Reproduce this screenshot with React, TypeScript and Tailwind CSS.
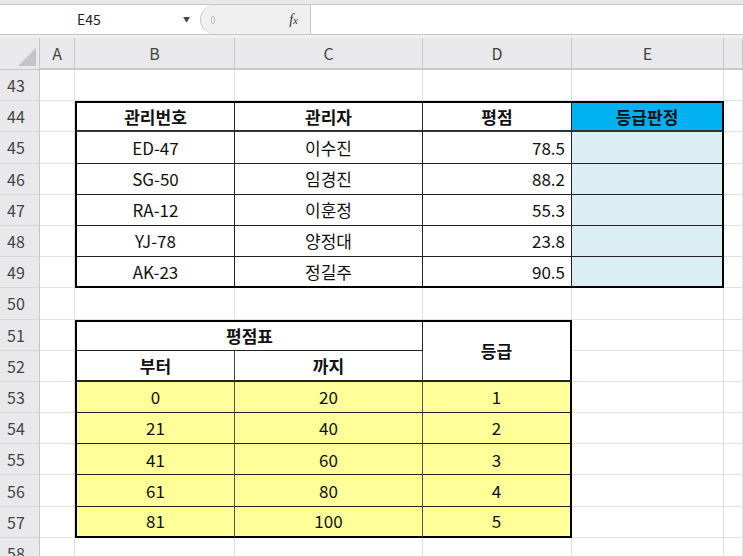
import React from "react";

const cols = ["A", "B", "C", "D", "E", ""];
type Cell = { t?: string; cls?: string; span?: string; skip?: boolean };

const font = { fontFamily: '"Noto Sans CJK KR", "Noto Sans", sans-serif' };

export default function App() {
  const rows: number[] = [];
  for (let r = 43; r <= 58; r++) rows.push(r);

  const T1 = [
    ["ED-47", "이수진", "78.5"],
    ["SG-50", "임경진", "88.2"],
    ["RA-12", "이훈정", "55.3"],
    ["YJ-78", "양정대", "23.8"],
    ["AK-23", "정길주", "90.5"],
  ];
  const T2 = [["0", "20", "1"], ["21", "40", "2"], ["41", "60", "3"], ["61", "80", "4"], ["81", "100", "5"]];

  const getCell = (r: number, c: number): Cell => {
    const bL = c === 1 ? " border-l-2 border-l-black" : "";
    if (r === 44 && c >= 1 && c <= 4) {
      const txt = ["관리번호", "관리자", "평점", "등급판정"][c - 1];
      return {
        t: txt,
        cls:
          "justify-center font-bold border-t-2 border-t-black border-b-2 border-b-[#333] border-r border-r-[#222]" +
          bL +
          (c === 4 ? " bg-[#00b0f0] border-r-2 border-r-black" : " bg-white"),
      };
    }
    if (r >= 45 && r <= 49 && c >= 1 && c <= 4) {
      const d = T1[r - 45];
      const last = r === 49 ? " border-b-2 border-b-black" : " border-b border-b-[#222]";
      if (c === 4) return { t: "", cls: "bg-[#daeef3] border-r-2 border-r-black" + last };
      return {
        t: d[c - 1],
        cls: (c === 3 ? "justify-end pr-1.5" : "justify-center") + " bg-white border-r border-r-[#222]" + last + bL,
      };
    }
    if (r === 51 && c >= 1 && c <= 3) {
      if (c === 2) return { skip: true };
      if (c === 1)
        return {
          t: "평점표",
          span: "col-span-2",
          cls: "justify-center font-bold bg-white border-t-2 border-t-black border-b border-b-[#222] border-r border-r-[#222]" + bL,
        };
      return {
        t: "등급",
        span: "row-span-2",
        cls: "justify-center font-bold bg-white border-t-2 border-t-black border-r-2 border-r-black border-b-2 border-b-[#222]",
      };
    }
    if (r === 52 && c >= 1 && c <= 3) {
      if (c === 3) return { skip: true };
      return {
        t: c === 1 ? "부터" : "까지",
        cls: "justify-center font-bold bg-white border-r border-r-[#444] border-b-2 border-b-[#222]" + bL,
      };
    }
    if (r >= 53 && r <= 57 && c >= 1 && c <= 3) {
      const last = r === 57 ? " border-b-2 border-b-black" : " border-b border-b-[#222]";
      return {
        t: T2[r - 53][c - 1],
        cls:
          "justify-center bg-[#ffff99]" +
          last +
          bL +
          (c === 3 ? " border-r-2 border-r-black" : " border-r border-r-[#555]"),
      };
    }
    return { t: "", cls: "bg-white border-r border-r-[#e1e1e1] border-b border-b-[#e1e1e1]" };
  };

  return (
    <div className="w-[743px] h-[556px] overflow-hidden bg-white text-[17px] text-[#111]" style={font}>
      <div className="h-[5px] bg-[#e8e8e8] border-b border-[#c8c8c8]" />
      <div className="h-[30px] flex bg-white border-b border-[#c6c6c6]">
        <div className="w-[200px] flex items-center pl-[77px] pr-[10px] text-[14px] text-[#222]">
          <span className="flex-1">E45</span>
          <span className="text-[7px] text-[#444]">▼</span>
        </div>
        <div className="w-[110px] flex items-center bg-[#f0f0f0] rounded-l-full border-l border-[#c6c6c6] pl-[10px] pr-[12px]">
          <span className="w-[4px] h-[8px] rounded-full border border-[#c0c0c0]" />
          <span className="flex-1" />
          <span className="text-[14px] italic text-[#333]" style={{ fontFamily: '"Liberation Serif", serif' }}>
            f<span className="text-[11px]">x</span>
          </span>
        </div>
        <div className="flex-1 border-l border-[#c6c6c6]" />
      </div>
      <div className="h-[3px] bg-[#f0f0f0]" />

      <div className="grid grid-cols-[40px_35px_160px_188px_149px_152px_19px] grid-rows-[32px_repeat(16,31.2px)]">
        <div className="bg-[#e9e9eb] border-r border-b border-[#c6c6c6] flex items-end justify-end p-[3px]">
          <div className="w-0 h-0 border-l-[18px] border-l-transparent border-b-[18px] border-b-[#c4c4c4]" />
        </div>
        {cols.map((c, i) => (
          <div
            key={i}
            className="bg-[#e9e9eb] border-r border-b-2 border-[#c9c9c9] flex items-center justify-center text-[16px] text-[#444]"
          >
            {c}
          </div>
        ))}
        {rows.map((r) => (
          <React.Fragment key={r}>
            <div className="bg-[#e9e9eb] border-r border-r-[#c6c6c6] border-b border-b-[#d6d6d6] flex items-center pl-[7px] text-[16px] text-[#444]">
              {r}
            </div>
            {cols.map((_, c) => {
              const cell = getCell(r, c);
              if (cell.skip) return null;
              return (
                <div key={c} className={"flex items-center " + (cell.span || "") + " " + cell.cls}>
                  {cell.t}
                </div>
              );
            })}
          </React.Fragment>
        ))}
      </div>
    </div>
  );
}
